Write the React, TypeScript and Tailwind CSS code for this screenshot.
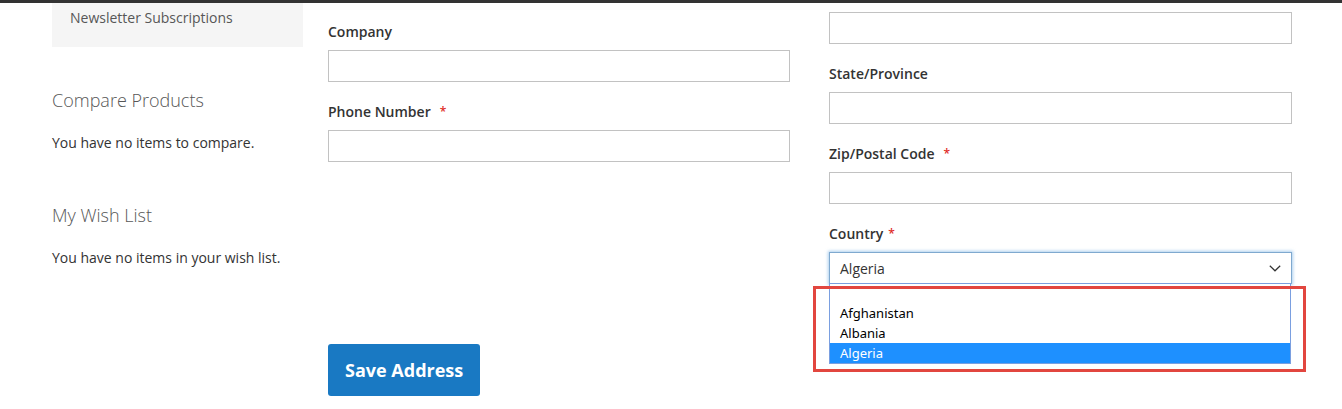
import React from 'react';

const Label = ({ text, required, gap = 'ml-[9px]' }: { text: string; required?: boolean; gap?: string }) => (
  <label className="block h-[18px] leading-[18px] text-[14px] font-semibold text-[#333]">
    {text}
    {required && <span className={`${gap} text-[12px] text-[#e02b27] align-top`}>*</span>}
  </label>
);

const Input = () => (
  <input type="text" className="block w-full h-[32px] border border-[#c2c2c2] bg-white outline-none" />
);

const Field = ({ label, required, gap }: { label: string; required?: boolean; gap?: string }) => (
  <div className="mt-[21px] first:mt-0">
    <Label text={label} required={required} gap={gap} />
    <div className="mt-[9px]">
      <Input />
    </div>
  </div>
);

const countries = ['', 'Afghanistan', 'Albania', 'Algeria'];

const CountrySelect = () => (
  <div className="relative">
    <div className="flex items-center justify-between h-[32px] pl-[10px] pr-[10px] border border-[#7fa9cf] shadow-[0_0_3px_1px_rgba(104,168,224,0.55)] bg-white text-[14px] text-[#333]">
      <span>Algeria</span>
      <svg width="12" height="7" viewBox="0 0 12 7" fill="none">
        <path d="M0.8 0.8 L6 5.8 L11.2 0.8" stroke="#333" strokeWidth="1.2" />
      </svg>
    </div>

    {/* native-looking option list */}
    <div className="absolute left-0 right-[1px] top-[31px] border border-[#7a9fe0] bg-white font-['Noto_Sans','Liberation_Sans',sans-serif] text-[13px] text-black">
      {countries.map((c, i) => (
        <div
          key={i}
          className={`pl-[10px] leading-[20px] ${i === 0 ? 'h-[19px]' : 'h-[20px]'} ${c === 'Algeria' ? 'bg-[#1e90ff] text-white' : ''}`}
        >
          {c}
        </div>
      ))}
    </div>

    {/* annotation frame */}
    <div className="absolute left-[-16px] top-[34px] w-[493px] h-[86px] border-[3px] border-[#e2463f] pointer-events-none" />
  </div>
);

export default function App() {
  return (
    <div className="w-[1342px] h-[409px] overflow-hidden bg-white font-['Open_Sans','Noto_Sans',sans-serif]">
      <div className="h-[3px] bg-[#333]" />
      <div className="flex pl-[52px]">
        {/* sidebar */}
        <aside className="w-[251px] shrink-0">
          <div className="h-[44px] bg-[#f5f5f5] pl-[18px] pt-[5px] text-[14px] leading-[20px] text-[#575757]">
            Newsletter Subscriptions
          </div>
          <h3 className="mt-[40px] text-[18px] leading-[26px] font-light text-[#575757]">Compare Products</h3>
          <p className="mt-[20px] text-[14px] leading-[20px] text-[#333]">You have no items to compare.</p>
          <h3 className="mt-[49px] text-[18px] leading-[26px] font-light text-[#575757]">My Wish List</h3>
          <p className="mt-[20px] text-[14px] leading-[20px] text-[#333]">You have no items in your wish list.</p>
        </aside>

        {/* form */}
        <main className="ml-[25px] flex gap-[39px]">
          <div className="w-[462px] pt-[20px]">
            <Field label="Company" />
            <Field label="Phone Number" required />
            <button className="mt-[182px] h-[52px] px-[17px] rounded-[3px] bg-[#1979c3] text-white text-[18px] font-bold">
              Save Address
            </button>
          </div>

          <div className="w-[463px] pt-[9px]">
            <Input />
            <Field label="State/Province" />
            <Field label="Zip/Postal Code" required />
            <div className="mt-[21px]">
              <Label text="Country" required gap="ml-[5px]" />
              <div className="mt-[9px]">
                <CountrySelect />
              </div>
            </div>
          </div>
        </main>
      </div>
    </div>
  );
}
